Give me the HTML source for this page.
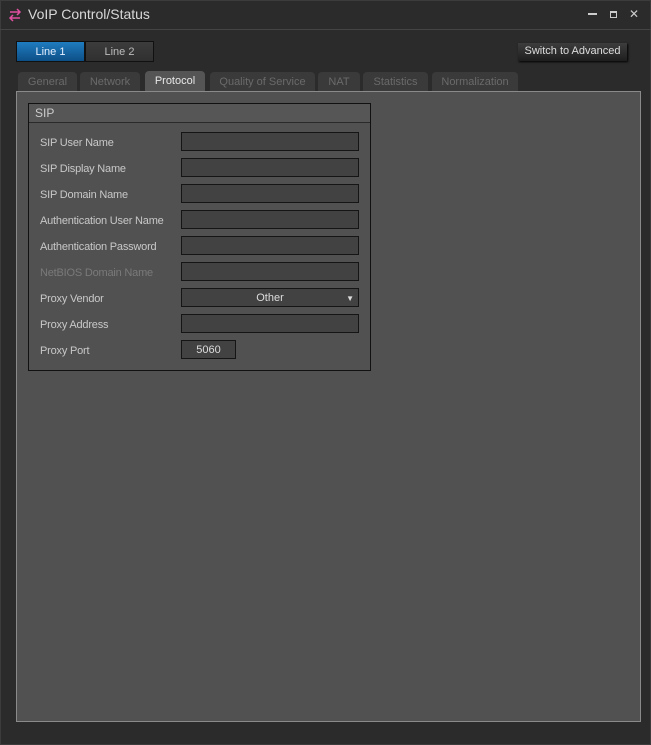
<!DOCTYPE html><html><head><style>
body{margin:0;width:651px;height:745px;background:#2b2b2b;font-family:"Liberation Sans",sans-serif;position:relative;overflow:hidden}
.a{position:absolute}
.win{left:0;top:0;width:649px;height:743px;border:1px solid #3c3c3c}
.title{left:28px;top:6px;color:#d8d8d8;font-size:14px}
.tab{top:72px;height:19px;background:#3a3a3a;color:#6a6a6a;font-size:11px;text-align:center;line-height:20px;border-radius:4px 4px 0 0}
.lbl{left:40px;color:#c8c8c8;font-size:11px;letter-spacing:-0.2px}
.in{left:181px;width:176px;height:17px;background:#424242;border:1px solid #151515}
</style></head><body>
<div class="a win"></div>
<svg class="a" style="left:8px;top:8px" width="14" height="14" viewBox="0 0 14 14" fill="none" stroke="#e050a0" stroke-width="1.5"><path d="M2 4h10M9 1l3 3-3 3M12 10H2M5 7l-3 3 3 3"/></svg>
<div class="a title">VoIP Control/Status</div>
<div class="a" style="left:588px;top:13px;width:9px;height:2px;background:#ccc"></div>
<div class="a" style="left:610px;top:11px;width:5px;height:4px;border:1.5px solid #ccc;border-top-width:2px"></div>
<div class="a" style="left:629px;top:7px;color:#ccc;font-size:12px">✕</div>
<div class="a" style="left:0;top:29px;width:651px;height:1px;background:#444"></div>
<div class="a" style="left:16px;top:41px;width:69px;height:21px;background:linear-gradient(#1f7cc0,#0d4f86);color:#e6f0ff;font-size:11px;text-align:center;line-height:21px;border:1px solid #111;box-sizing:border-box">Line 1</div>
<div class="a" style="left:85px;top:41px;width:69px;height:21px;background:linear-gradient(#3c3c3c,#303030);color:#bbb;font-size:11px;text-align:center;line-height:21px;border:1px solid #111;box-sizing:border-box">Line 2</div>
<div class="a" style="left:518px;top:43px;width:109px;height:18px;background:linear-gradient(#3d3d3d,#1e1e1e);color:#ddd;font-size:11px;text-align:center;line-height:17px;box-shadow:1px 1px 2px #000">Switch to Advanced</div>
<div class="a tab" style="left:18px;width:59px">General</div>
<div class="a tab" style="left:80px;width:60px">Network</div>
<div class="a tab" style="left:145px;width:60px;background:#555;color:#e8e8e8;top:71px;height:20px">Protocol</div>
<div class="a tab" style="left:210px;width:105px">Quality of Service</div>
<div class="a tab" style="left:318px;width:42px">NAT</div>
<div class="a tab" style="left:363px;width:65px">Statistics</div>
<div class="a tab" style="left:432px;width:86px">Normalization</div>
<div class="a" style="left:16px;top:91px;width:623px;height:629px;background:#515151;border:1px solid #8a8a8a"></div>
<div class="a" style="left:28px;top:103px;width:341px;height:266px;border:1px solid #111"></div>
<div class="a" style="left:29px;top:104px;width:341px;height:18px;background:#565656;border-bottom:1px solid #2a2a2a"></div>
<div class="a" style="left:35px;top:106px;color:#ccc;font-size:12px">SIP</div>
<div class="a lbl" style="top:137px">SIP User Name</div><div class="a in" style="top:132px"></div>
<div class="a lbl" style="top:163px">SIP Display Name</div><div class="a in" style="top:158px"></div>
<div class="a lbl" style="top:189px">SIP Domain Name</div><div class="a in" style="top:184px"></div>
<div class="a lbl" style="top:215px">Authentication User Name</div><div class="a in" style="top:210px"></div>
<div class="a lbl" style="top:241px">Authentication Password</div><div class="a in" style="top:236px"></div>
<div class="a lbl" style="top:267px;color:#7a7a7a">NetBIOS Domain Name</div><div class="a in" style="top:262px"></div>
<div class="a lbl" style="top:293px">Proxy Vendor</div><div class="a in" style="top:288px;color:#ddd;font-size:11px;text-align:center;line-height:19px">Other<span class="a" style="right:4px;top:0;font-size:8px">▼</span></div>
<div class="a lbl" style="top:319px">Proxy Address</div><div class="a in" style="top:314px"></div>
<div class="a lbl" style="top:345px">Proxy Port</div><div class="a in" style="top:340px;width:53px;color:#ddd;font-size:11px;text-align:center;line-height:19px">5060</div>
</body></html>
